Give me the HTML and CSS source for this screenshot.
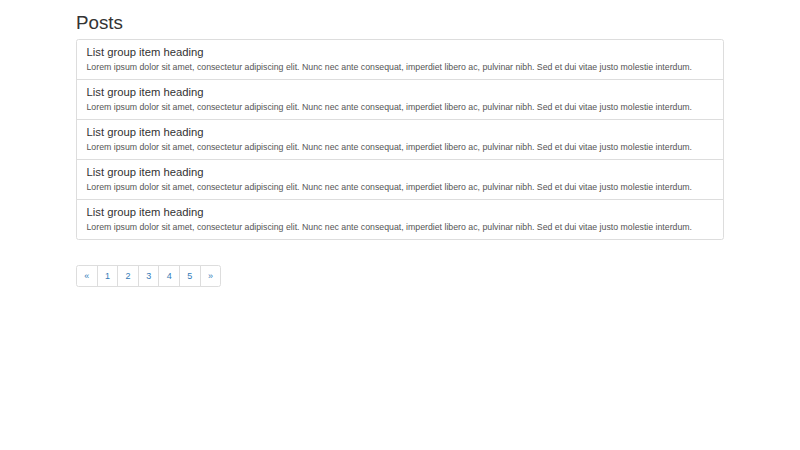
FILE: index.html
```html
<!DOCTYPE html>
<html>
<head>
<meta charset="utf-8">
<link rel="stylesheet" href="styles.css">
</head>
<body>
<div class="container">
  <h2 class="title">Posts</h2>
  <div class="list-group">
    <a class="list-group-item" href="#">
      <h4 class="item-heading">List group item heading</h4>
      <p class="item-text">Lorem ipsum dolor sit amet, consectetur adipiscing elit. Nunc nec ante consequat, imperdiet libero ac, pulvinar nibh. Sed et dui vitae justo molestie interdum.</p>
    </a>
    <a class="list-group-item" href="#">
      <h4 class="item-heading">List group item heading</h4>
      <p class="item-text">Lorem ipsum dolor sit amet, consectetur adipiscing elit. Nunc nec ante consequat, imperdiet libero ac, pulvinar nibh. Sed et dui vitae justo molestie interdum.</p>
    </a>
    <a class="list-group-item" href="#">
      <h4 class="item-heading">List group item heading</h4>
      <p class="item-text">Lorem ipsum dolor sit amet, consectetur adipiscing elit. Nunc nec ante consequat, imperdiet libero ac, pulvinar nibh. Sed et dui vitae justo molestie interdum.</p>
    </a>
    <a class="list-group-item" href="#">
      <h4 class="item-heading">List group item heading</h4>
      <p class="item-text">Lorem ipsum dolor sit amet, consectetur adipiscing elit. Nunc nec ante consequat, imperdiet libero ac, pulvinar nibh. Sed et dui vitae justo molestie interdum.</p>
    </a>
    <a class="list-group-item" href="#">
      <h4 class="item-heading">List group item heading</h4>
      <p class="item-text">Lorem ipsum dolor sit amet, consectetur adipiscing elit. Nunc nec ante consequat, imperdiet libero ac, pulvinar nibh. Sed et dui vitae justo molestie interdum.</p>
    </a>
  </div>
  <nav class="pager-nav">
    <ul class="pagination">
      <li><a href="#">&laquo;</a></li>
      <li><a href="#">1</a></li>
      <li><a href="#">2</a></li>
      <li><a href="#">3</a></li>
      <li><a href="#">4</a></li>
      <li><a href="#">5</a></li>
      <li><a href="#">&raquo;</a></li>
    </ul>
  </nav>
</div>
</body>
</html>
```
FILE: styles.css
```css
html, body {
  margin: 0;
  padding: 0;
  background: #fff;
}
body {
  font-family: "Liberation Sans", Arial, Helvetica, sans-serif;
  font-size: 8.75px;
  line-height: 1.42857;
  color: #333;
}
.container {
  width: 648px;
  margin: 0 auto;
}
.title {
  font-size: 18.75px;
  font-weight: normal;
  line-height: 20.6px;
  margin: 12.5px 0 6px;
  color: #333;
}
.list-group {
  margin: 0 0 12.5px;
  padding: 0;
}
.list-group-item {
  display: block;
  padding: 6px 9.5px;
  border: 1px solid #ddd;
  margin-bottom: -1px;
  background: #fff;
  text-decoration: none;
  color: #555;
}
.list-group-item:first-child {
  border-top-left-radius: 2.5px;
  border-top-right-radius: 2.5px;
}
.list-group-item:last-child {
  margin-bottom: 0;
  border-bottom-left-radius: 2.5px;
  border-bottom-right-radius: 2.5px;
}
.item-heading {
  margin: 0 0 3px;
  font-size: 11.25px;
  font-weight: normal;
  line-height: 12.5px;
  color: #333;
}
.item-text {
  margin: 0;
  font-size: 8.75px;
  line-height: 11.5px;
  color: #555;
}
.pager-nav {
  display: block;
}
.pagination {
  display: inline-flex;
  margin: 12.5px 0;
  padding: 0;
  list-style: none;
  vertical-align: top;
}
.pagination li {
  display: block;
}
.pagination a {
  display: block;
  padding: 3.5px 7.3px;
  margin-left: -1px;
  border: 1px solid #ddd;
  color: #337ab7;
  text-decoration: none;
  line-height: 13px;
  font-size: 9px;
  background: #fff;
}
.pagination li:first-child a {
  margin-left: 0;
  border-top-left-radius: 2.5px;
  border-bottom-left-radius: 2.5px;
}
.pagination li:last-child a {
  border-top-right-radius: 2.5px;
  border-bottom-right-radius: 2.5px;
}
```
